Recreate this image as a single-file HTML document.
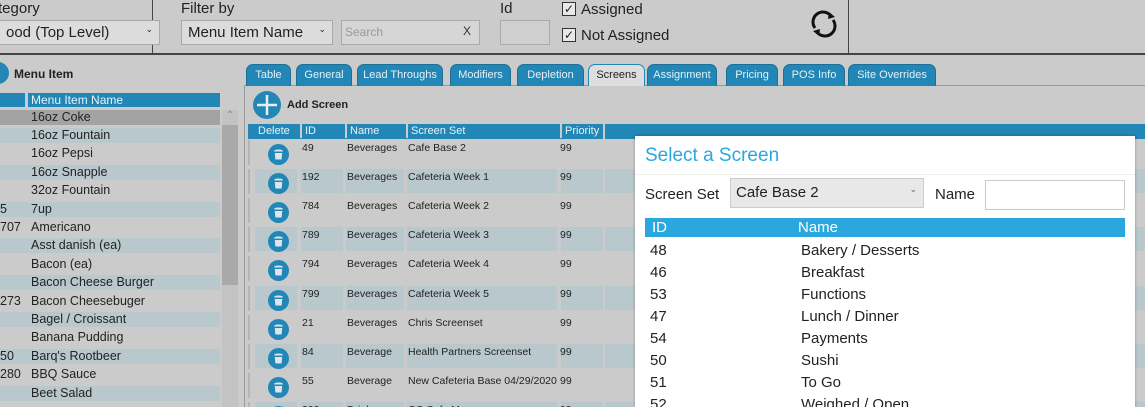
<!DOCTYPE html>
<html style="overflow:hidden;width:1145px;height:407px"><head><style>
*{margin:0;padding:0;box-sizing:border-box}
body{width:1145px;height:407px;overflow:hidden;background:#cbcbcb;font-family:"Liberation Sans",sans-serif;position:relative;color:#222}
.a{position:absolute;white-space:nowrap}
.sel{position:absolute;background:#dcdcdc;border:1px solid #aaa;font-size:15px;padding:3px 6px}
.tab{position:absolute;top:64px;height:22px;background:#2287b6;border:1px solid #1d6f95;border-bottom:none;border-radius:7px 7px 0 0;color:#e6f0f5;font-size:11px;text-align:center;line-height:21px}
.hd{position:absolute;background:#2287b6;color:#e8f2f8;font-size:11px;line-height:14px;padding-left:3px}
.cell{position:absolute;font-size:10.5px}
.li{position:absolute;left:0;font-size:12.5px}
</style></head><body>
<div class="a" style="left:0;top:53px;width:1145px;height:2px;background:#444"></div>
<div class="a" style="left:152px;top:0;width:1px;height:53px;background:#444"></div>
<div class="a" style="left:848px;top:0;width:1px;height:53px;background:#444"></div>
<div class="a" style="left:-2px;top:0;font-size:15px">tegory</div>
<div class="sel" style="left:-1px;top:20px;width:161px;height:25px">ood (Top Level)<span style="position:absolute;right:6px;top:3px;font-size:9px">&#8964;</span></div>
<div class="a" style="left:181px;top:0;font-size:15px">Filter by</div>
<div class="sel" style="left:181px;top:20px;width:152px;height:25px">Menu Item Name<span style="position:absolute;right:6px;top:3px;font-size:9px">&#8964;</span></div>
<div class="a" style="left:341px;top:20px;width:139px;height:25px;background:#d6d6d6;border:1px solid #aaa;font-size:12px;color:#999;padding:4px 3px">Search<span style="position:absolute;right:8px;top:3px;color:#333">X</span></div>
<div class="a" style="left:500px;top:0;font-size:15px">Id</div>
<div class="a" style="left:500px;top:20px;width:50px;height:25px;border:1px solid #aaa;background:#cfcfcf"></div>
<div class="a" style="left:562px;top:2px;width:14px;height:14px;border:1px solid #333;background:#e8e8e8;font-size:12px;line-height:12px;text-align:center">&#10003;</div>
<div class="a" style="left:581px;top:1px;font-size:15px">Assigned</div>
<div class="a" style="left:562px;top:28px;width:14px;height:14px;border:1px solid #333;background:#e8e8e8;font-size:12px;line-height:12px;text-align:center">&#10003;</div>
<div class="a" style="left:581px;top:27px;font-size:15px">Not Assigned</div>
<svg class="a" style="left:809px;top:9px" width="30" height="30" viewBox="0 0 30 30"><path d="M6 19A10 10 0 0 1 22 7" fill="none" stroke="#111" stroke-width="3"/><path d="M24 11A10 10 0 0 1 8 23" fill="none" stroke="#111" stroke-width="3"/><path d="M20 3l6 5-7 2z" fill="#111"/><path d="M10 27l-6-5 7-2z" fill="#111"/></svg>
<div class="a" style="left:-13px;top:62px;width:22px;height:22px;border-radius:50%;background:#2287b6"></div>
<div class="a" style="left:14px;top:67px;font-size:12px;font-weight:bold">Menu Item</div>
<div class="hd" style="left:0;top:93px;width:25px;height:14px"></div>
<div class="hd" style="left:28px;top:93px;width:192px;height:14px;font-size:12px">Menu Item Name</div>
<div class="a" style="left:0;top:110px;width:220px;height:15px;background:#a3a3a3"></div>
<div class="a" style="left:222px;top:110px;width:16px;height:297px;background:#c3c3c3"></div>
<div class="a" style="left:222px;top:125px;width:16px;height:160px;background:#a9a9a9"></div>
<div class="a" style="left:226px;top:110px;font-size:10px;color:#888">&#8963;</div>
<div class="a" style="left:0;top:110px;width:220px">
<div class="li" style="top:0;left:31px">16oz Coke</div>
<div style="position:absolute;top:18px;left:0;width:220px;height:15px;background:#b9c8cd"></div>
<div class="li" style="top:18px;left:31px">16oz Fountain</div>
<div class="li" style="top:36px;left:31px">16oz Pepsi</div>
<div style="position:absolute;top:55px;left:0;width:220px;height:15px;background:#b9c8cd"></div>
<div class="li" style="top:55px;left:31px">16oz Snapple</div>
<div class="li" style="top:73px;left:31px">32oz Fountain</div>
<div style="position:absolute;top:92px;left:0;width:220px;height:15px;background:#b9c8cd"></div>
<div class="li" style="top:92px">5</div><div class="li" style="top:92px;left:31px">7up</div>
<div class="li" style="top:110px">707</div><div class="li" style="top:110px;left:31px">Americano</div>
<div style="position:absolute;top:128px;left:0;width:220px;height:15px;background:#b9c8cd"></div>
<div class="li" style="top:128px;left:31px">Asst danish (ea)</div>
<div class="li" style="top:147px;left:31px">Bacon (ea)</div>
<div style="position:absolute;top:165px;left:0;width:220px;height:15px;background:#b9c8cd"></div>
<div class="li" style="top:165px;left:31px">Bacon Cheese Burger</div>
<div class="li" style="top:184px">273</div><div class="li" style="top:184px;left:31px">Bacon Cheesebuger</div>
<div style="position:absolute;top:202px;left:0;width:220px;height:15px;background:#b9c8cd"></div>
<div class="li" style="top:202px;left:31px">Bagel / Croissant</div>
<div class="li" style="top:220px;left:31px">Banana Pudding</div>
<div style="position:absolute;top:239px;left:0;width:220px;height:15px;background:#b9c8cd"></div>
<div class="li" style="top:239px">50</div><div class="li" style="top:239px;left:31px">Barq's Rootbeer</div>
<div class="li" style="top:257px">280</div><div class="li" style="top:257px;left:31px">BBQ Sauce</div>
<div style="position:absolute;top:276px;left:0;width:220px;height:15px;background:#b9c8cd"></div>
<div class="li" style="top:276px;left:31px">Beet Salad</div>
</div>
<div class="a" style="left:244px;top:85px;width:901px;height:1px;background:#999"></div>
<div class="a" style="left:244px;top:85px;width:1px;height:322px;background:#999"></div>
<div class="tab" style="left:246px;width:45px">Table</div>
<div class="tab" style="left:296px;width:56px">General</div>
<div class="tab" style="left:357px;width:86px">Lead Throughs</div>
<div class="tab" style="left:450px;width:61px">Modifiers</div>
<div class="tab" style="left:517px;width:67px">Depletion</div>
<div class="tab" style="left:588px;width:57px;background:#dedede;color:#222;border-color:#2287b6">Screens</div>
<div class="tab" style="left:647px;width:70px">Assignment</div>
<div class="tab" style="left:726px;width:52px">Pricing</div>
<div class="tab" style="left:783px;width:62px">POS Info</div>
<div class="tab" style="left:848px;width:88px">Site Overrides</div>
<svg class="a" style="left:253px;top:91px" width="28" height="28"><circle cx="14" cy="14" r="14" fill="#2287b6"/><path d="M14 4v20M4 14h20" stroke="#e8f0f4" stroke-width="2.5"/></svg>
<div class="a" style="left:287px;top:99px;font-size:11px;font-weight:bold">Add Screen</div>
<div class="a" style="left:248px;top:124px;width:897px;height:15px;background:#2287b6"></div>
<div class="hd" style="left:255px;top:124px;width:42px">Delete</div>
<div class="hd" style="left:300px;top:124px;width:42px;border-left:2px solid #cbcbcb">ID</div>
<div class="hd" style="left:345px;top:124px;width:58px;border-left:2px solid #cbcbcb">Name</div>
<div class="hd" style="left:406px;top:124px;width:151px;border-left:2px solid #cbcbcb">Screen Set</div>
<div class="hd" style="left:560px;top:124px;width:42px;border-left:2px solid #cbcbcb">Priority</div>
<div class="a" style="left:603px;top:124px;width:2px;height:15px;background:#cbcbcb"></div>
<div id="g"></div>
<script>
var rows=[["49","Beverages","Cafe Base 2"],["192","Beverages","Cafeteria Week 1"],["784","Beverages","Cafeteria Week 2"],["789","Beverages","Cafeteria Week 3"],["794","Beverages","Cafeteria Week 4"],["799","Beverages","Cafeteria Week 5"],["21","Beverages","Chris Screenset"],["84","Beverage","Health Partners Screenset"],["55","Beverage","New Cafeteria Base 04/29/2020"],["393","Drinks","CC Cafe Menu"]];
var h="";
rows.forEach(function(r,i){var t=139+i*29.1;
if(i%2==1){[[255,42],[301,42],[346,58],[407,150],[561,42],[605,540]].forEach(function(c){h+='<div class="a" style="left:'+c[0]+'px;top:'+(t+1)+'px;width:'+c[1]+'px;height:24px;background:#b9c8cd"></div>'});}
h+='<div class="a" style="left:248px;top:'+(t+1)+'px;width:2px;height:25px;background:#b5b5b5"></div>';
h+='<svg class="a" style="left:268px;top:'+(t+5)+'px" width="21" height="21" viewBox="0 0 21 21"><circle cx="10.5" cy="10.5" r="10.5" fill="#2287b6"/><path d="M6 7.5Q6 5.5 10.5 5.5Q15 5.5 15 7.5Z" fill="#dfe6ea"/><path d="M6.8 9h7.4l-.6 6.5h-6.2z" fill="#dfe6ea"/></svg>';
h+='<div class="cell a" style="left:302px;top:'+(t+3)+'px">'+r[0]+'</div><div class="cell a" style="left:347px;top:'+(t+3)+'px">'+r[1]+'</div><div class="cell a" style="left:408px;top:'+(t+3)+'px">'+r[2]+'</div><div class="cell a" style="left:560px;top:'+(t+3)+'px">99</div>';});
document.getElementById("g").innerHTML=h;
</script>
<div class="a" style="left:635px;top:136px;width:500px;height:271px;background:#fff;box-shadow:0 0 3px rgba(0,0,0,.3)"></div>
<div class="a" style="left:645px;top:145px;font-size:19px;color:#2aa7df">Select a Screen</div>
<div class="a" style="left:635px;top:174px;width:500px;height:1px;background:#eee"></div>
<div class="a" style="left:645px;top:186px;font-size:15px">Screen Set</div>
<div class="a" style="left:730px;top:178px;width:194px;height:30px;background:#e8e8e8;border:1px solid #ccc;font-size:15px;padding:5px 5px">Cafe Base 2<span style="position:absolute;right:6px;top:5px;font-size:9px;color:#666">&#8964;</span></div>
<div class="a" style="left:935px;top:186px;font-size:15px">Name</div>
<div class="a" style="left:985px;top:180px;width:140px;height:30px;border:1px solid #ccc"></div>
<div class="a" style="left:645px;top:218px;width:480px;height:19px;background:#2aa7df;color:#fff;font-size:15px;line-height:19px"><span style="position:absolute;left:7px">ID</span><span style="position:absolute;left:153px">Name</span></div>
<div class="a" style="left:650px;top:240px;font-size:15px;line-height:22px">48<br>46<br>53<br>47<br>54<br>50<br>51<br>52</div>
<div class="a" style="left:801px;top:240px;font-size:15px;line-height:22px">Bakery / Desserts<br>Breakfast<br>Functions<br>Lunch / Dinner<br>Payments<br>Sushi<br>To Go<br>Weighed / Open</div>
</body></html>
